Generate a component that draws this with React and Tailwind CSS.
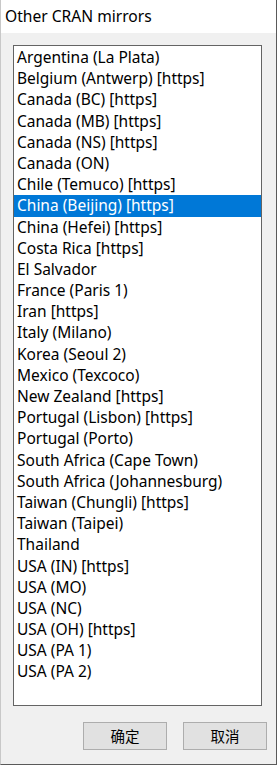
import React from 'react';

const mirrors = [
    'Argentina (La Plata)',
    'Belgium (Antwerp) [https]',
    'Canada (BC) [https]',
    'Canada (MB) [https]',
    'Canada (NS) [https]',
    'Canada (ON)',
    'Chile (Temuco) [https]',
    'China (Beijing) [https]',
    'China (Hefei) [https]',
    'Costa Rica [https]',
    'El Salvador',
    'France (Paris 1)',
    'Iran [https]',
    'Italy (Milano)',
    'Korea (Seoul 2)',
    'Mexico (Texcoco)',
    'New Zealand [https]',
    'Portugal (Lisbon) [https]',
    'Portugal (Porto)',
    'South Africa (Cape Town)',
    'South Africa (Johannesburg)',
    'Taiwan (Chungli) [https]',
    'Taiwan (Taipei)',
    'Thailand',
    'USA (IN) [https]',
    'USA (MO)',
    'USA (NC)',
    'USA (OH) [https]',
    'USA (PA 1)',
    'USA (PA 2)',
];

const font = { fontFamily: '"Noto Sans", "Noto Sans CJK SC", sans-serif' };
const cjk = { fontFamily: '"Noto Sans CJK SC", sans-serif' };

export default function App() {
    const selected = 'China (Beijing) [https]';
    return (
        <div
            className="w-[277px] h-[765px] flex flex-col bg-[#f0f0f0] border-l border-l-[#c8c8c8] border-r border-b border-[#5a5a5a] text-[#000]"
            style={font}
        >
            <div className="h-[33px] bg-white flex items-center pl-[4px] text-[15.6px]">
                Other CRAN mirrors
            </div>

            <div className="flex-1 flex flex-col pt-[12px] pl-[12px] pr-[14px] pb-[14px]">
                <div className="h-[661px] bg-white border border-[#646464] pt-[1px] overflow-hidden">
                    {mirrors.map((m) => (
                        <div
                            key={m}
                            className={
                                m === selected
                                    ? 'h-[21.2px] leading-[21.2px] pl-[3px] text-[15.5px] bg-[#0078d7] text-white whitespace-nowrap'
                                    : 'h-[21.2px] leading-[21.2px] pl-[3px] text-[15.5px] whitespace-nowrap'
                            }
                        >
                            {m}
                        </div>
                    ))}
                </div>

                <div className="flex justify-end gap-[16px] mt-[16px] mr-[-5px]">
                    <button className="w-[84px] h-[28px] bg-[#e1e1e1] border border-[#adadad] text-[14.5px] leading-none" style={cjk}>
                        确定
                    </button>
                    <button className="w-[84px] h-[28px] bg-[#e1e1e1] border border-[#adadad] text-[14.5px] leading-none" style={cjk}>
                        取消
                    </button>
                </div>
            </div>
        </div>
    );
}
